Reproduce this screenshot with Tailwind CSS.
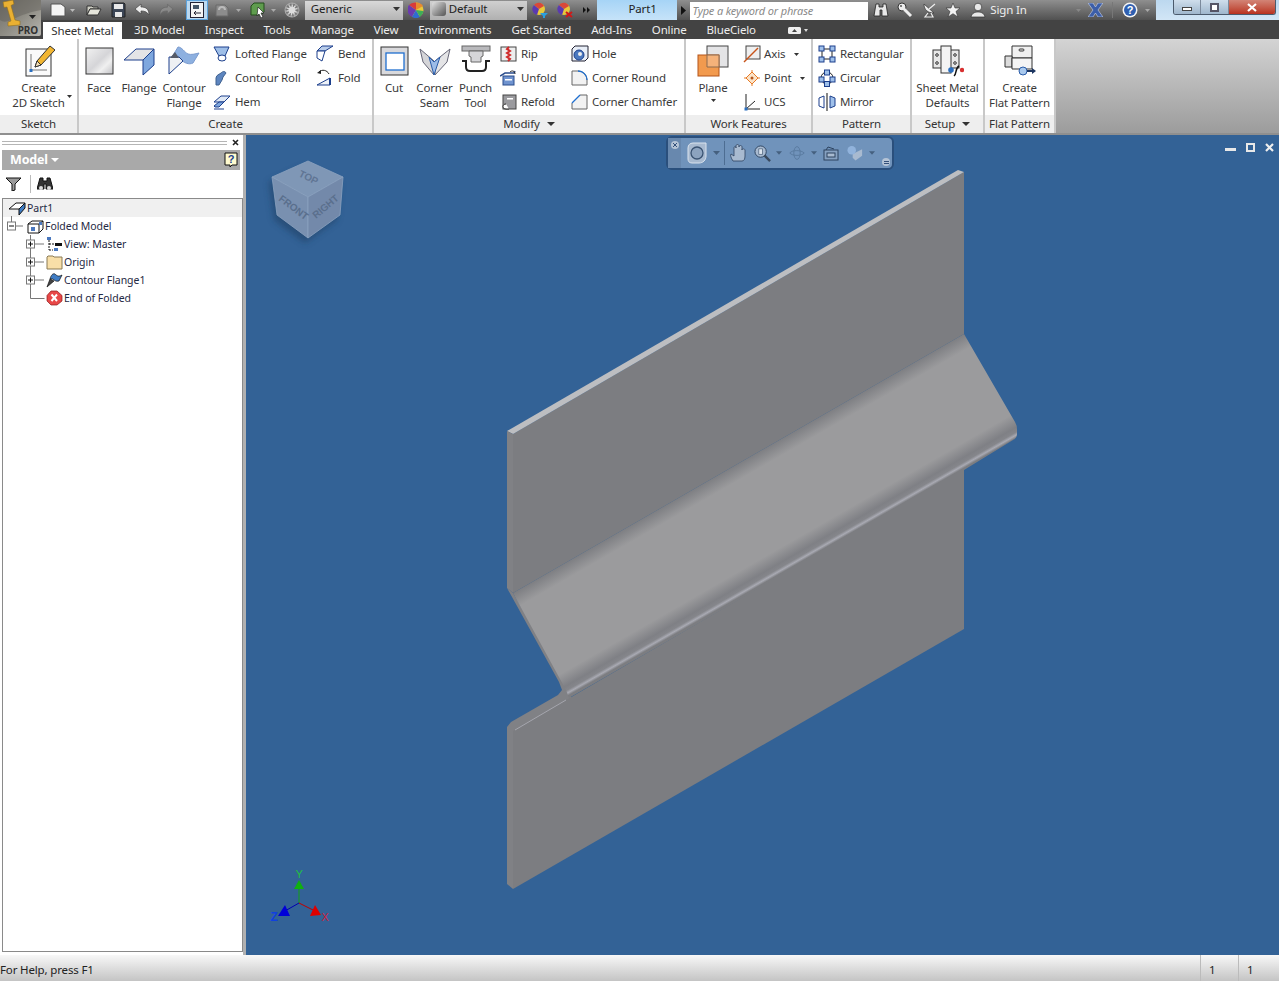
<!DOCTYPE html>
<html lang="en">
<head>
<meta charset="UTF-8">
<title>Autodesk Inventor - Part1</title>
<script src="https://cdn.jsdelivr.net/npm/@tailwindcss/browser@4"></script>
</head>
<body class="m-0 bg-white">
<div class="flex h-[981px] w-[1279px] flex-col overflow-hidden bg-white font-['Noto_Sans',sans-serif] text-[11.5px] tracking-[-0.15px] text-[#3a3a3a]">

  <!-- title bar + tabs -->
  <header class="flex h-[39px] shrink-0 bg-[#434343]">
    <div class="relative h-[36px] w-[41px] shrink-0 rounded-br-[2px] bg-gradient-to-br from-[#6f6d66] via-[#8e8c84] to-[#b8b6b0]">
      <svg class="absolute left-0 top-0" width="41" height="36" viewBox="0 0 41 36">
        <path d="M0 20C8 26 16 14 41 10V0H0Z" fill="#5f5e58" opacity=".45"/>
        <path d="M3 2L13 0L14 4L11 5.500L15 20L20 21L20 25L8 26L8 22L11 21L7 7L4 7.500Z" fill="#eab032" stroke="#94701c" stroke-width=".6"/>
        <path d="M29 15h7l-3.500 4z" fill="#222"/>
      </svg>
      <span class="absolute bottom-0 right-[3px] text-[10px] font-bold leading-[12px] text-[#333]">PRO</span>
    </div>
    <div class="flex min-w-0 flex-1 flex-col">
      <div class="flex h-[20px] items-center bg-gradient-to-b from-[#8f8f8f] to-[#515151]">
        <svg class="ml-[9px]" width="16" height="16" viewBox="0 0 16 16"><path d="M1 2h10l4 3v9H1z" fill="#f4f4f4" stroke="#555"/></svg>
        <svg class="ml-[4px]" width="5" height="3" viewBox="0 0 5 3"><path d="M0 0h5L2.500 3z" fill="#bbb"/></svg>
        <svg class="ml-[11px]" width="16" height="16" viewBox="0 0 16 16"><path d="M1 13V4h5l1 1h5v2H4z" fill="#cfcfc4" stroke="#333"/><path d="M1 13l3-6h11l-3 6z" fill="#e6e6dc" stroke="#333"/></svg>
        <svg class="ml-[9px]" width="15" height="16" viewBox="0 0 15 16"><path d="M1 1h12l1 1v13H1z" fill="#3c4656" stroke="#222"/><rect x="3" y="2" width="9" height="5" fill="#e8e8e8"/><rect x="4" y="10" width="7" height="5" fill="#e8e8e8"/></svg>
        <svg class="ml-[8px]" width="16" height="16" viewBox="0 0 16 16"><path d="M1 7l6-5v3c5 0 8 2 8 8-2-3-4-4-8-4v3z" fill="#eee" stroke="#444" stroke-width=".7"/></svg>
        <svg class="ml-[9px]" width="15" height="16" viewBox="0 0 16 16"><path d="M15 7L9 2v3C4 5 1 7 1 13c2-3 4-4 8-4v3z" fill="#8a8a8a" stroke="#666" stroke-width=".7"/></svg>
        <div class="ml-[12px] flex h-[20px] w-[22px] items-center justify-center border border-[#5ea3dc] bg-[#bcd9f0]">
          <svg width="14" height="16" viewBox="0 0 14 16"><rect x=".5" y=".5" width="13" height="15" fill="#f4f4f4" stroke="#223"/><rect x="3" y="3" width="6" height="4" fill="#456"/><path d="M4 11h7M4 11l2-2M4 11l2 2" stroke="#223" fill="none"/></svg>
        </div>
        <svg class="ml-[6px]" width="16" height="16" viewBox="0 0 16 16"><path d="M2 3h9l3 3v8H2z" fill="#8c8c8c" stroke="#6a6a6a"/><path d="M5 8a3 3 0 0 1 6 0" stroke="#bbb" fill="none" stroke-width="2"/></svg>
        <svg class="ml-[6px]" width="5" height="3" viewBox="0 0 5 3"><path d="M0 0h5L2.500 3z" fill="#aaa"/></svg>
        <svg class="ml-[9px]" width="16" height="16" viewBox="0 0 16 16"><path d="M1 4l3-3h10v9l-3 3H1z" fill="#5f9c4e" stroke="#234d1c"/><path d="M8 5l6 6-3 0 2 4-2 1-2-4-2 2z" fill="#fff" stroke="#222" stroke-width=".7"/></svg>
        <svg class="ml-[5px]" width="5" height="3" viewBox="0 0 5 3"><path d="M0 0h5L2.500 3z" fill="#aaa"/></svg>
        <svg class="ml-[8px]" width="16" height="16" viewBox="0 0 16 16"><circle cx="8" cy="8" r="7.500" fill="#aaa"/><circle cx="8" cy="8" r="5" fill="#ddd" stroke="#777" stroke-dasharray="1.500 1.500" stroke-width="3"/></svg>
        <div class="ml-[5px] flex h-[19px] w-[98px] items-center justify-between bg-gradient-to-b from-[#d9d9d9] to-[#b4b4b4] pb-[2px] pl-[6px] pr-[3px] text-[#222]"><span>Generic</span><svg width="7" height="4" viewBox="0 0 7 4"><path d="M0 0h7L3.500 4z" fill="#333"/></svg></div>
        <svg class="ml-[5px]" width="16" height="16" viewBox="0 0 16 16"><circle cx="8" cy="8" r="7.500" fill="#e8c93a"/><path d="M8 8L1 3A8 8 0 0 1 8 .5z" fill="#d93a3a"/><path d="M8 8V.5A8 8 0 0 1 15 4z" fill="#e88a2e"/><path d="M8 8L1 3A8 8 0 0 0 4 15z" fill="#6b3ab0"/><path d="M8 8L4 15A8 8 0 0 0 12 15z" fill="#2f6bd0"/><path d="M8 8L12 15A8 8 0 0 0 15.500 9z" fill="#3fae58"/></svg>
        <div class="ml-[6px] flex h-[19px] w-[97px] items-center justify-between bg-gradient-to-b from-[#d0d0d0] to-[#b0b0b0] pb-[2px] pl-[2px] pr-[3px] text-[#222]"><span class="flex items-center gap-[3px]"><span class="h-[14px] w-[14px] rounded-[3px] bg-gradient-to-br from-[#e4e4e4] to-[#555]"></span>Default</span><svg width="7" height="4" viewBox="0 0 7 4"><path d="M0 0h7L3.500 4z" fill="#333"/></svg></div>
        <svg class="ml-[5px]" width="16" height="16" viewBox="0 0 16 16"><circle cx="7" cy="7" r="6" fill="#e8c93a"/><path d="M7 7L2 3A6 6 0 0 1 12 4z" fill="#d9483a"/><path d="M7 7L2 3A6 6 0 0 0 5 13z" fill="#5a3ab0"/><path d="M8 11h8l-3 3v2h-2v-2z" fill="#2aa0e0"/></svg>
        <svg class="ml-[9px]" width="16" height="16" viewBox="0 0 16 16"><circle cx="7" cy="7" r="6" fill="#e8c93a"/><path d="M7 7L2 3A6 6 0 0 1 12 4z" fill="#d9483a"/><path d="M7 7L2 3A6 6 0 0 0 5 13z" fill="#5a3ab0"/><path d="M9 10l6 5M15 10l-6 5" stroke="#d01818" stroke-width="2"/></svg>
        <svg class="ml-[10px]" width="8" height="6" viewBox="0 0 8 6"><path d="M0 0l3 3-3 3zM4 0l3 3-3 3z" fill="#111"/></svg>
        <div class="ml-[6px] flex h-[20px] w-[80px] items-center justify-center bg-gradient-to-b from-[#a6d4f6] to-[#c6e3f9] pb-[3px] pl-[12px] text-[#222]">Part1</div>
        <svg class="ml-[4px]" width="5" height="9" viewBox="0 0 5 9"><path d="M0 0l5 4.500L0 9z" fill="#111"/></svg>
        <div class="ml-[4px] flex h-[18px] w-[179px] items-center self-end bg-white pl-[3px] text-[11px] italic text-[#8a8a8a]">Type a keyword or phrase</div>
        <svg class="ml-[5px]" width="16" height="16" viewBox="0 0 16 16"><path d="M3 2h3v3h4V2h3l2 12H9V8H7v6H1z" fill="#e8e8e8" stroke="#222" stroke-width=".8"/></svg>
        <svg class="ml-[8px]" width="16" height="16" viewBox="0 0 16 16"><circle cx="5" cy="5" r="4" fill="#eee" stroke="#333"/><path d="M7 7l7 7" stroke="#eee" stroke-width="3"/><circle cx="4" cy="4" r="1" fill="#555"/></svg>
        <svg class="ml-[9px]" width="16" height="16" viewBox="0 0 16 16"><path d="M2 2c0 6 4 9 10 9z" fill="#eee" stroke="#333" stroke-width=".7"/><path d="M7 7l6-5M6 11l-3 4h8l-2-4" stroke="#eee" fill="none" stroke-width="1.200"/></svg>
        <svg class="ml-[7px]" width="16" height="16" viewBox="0 0 16 16"><path d="M8 1l2 5h5l-4 3.500 2 5.500-5-3.300L3 15l2-5.500L1 6h5z" fill="#f2f2f2" stroke="#333" stroke-width=".6"/></svg>
        <svg class="ml-[9px]" width="16" height="16" viewBox="0 0 16 16"><circle cx="8" cy="5" r="3.800" fill="#e8e8e8" stroke="#333" stroke-width=".7"/><path d="M1 15c1-4 4-5 7-5s6 1 7 5z" fill="#e8e8e8" stroke="#333" stroke-width=".7"/></svg>
        <span class="ml-[4px] w-[36px] whitespace-nowrap text-[#eee]">Sign In</span>
        <svg class="ml-[50px]" width="5" height="3" viewBox="0 0 5 3"><path d="M0 0h5L2.500 3z" fill="#888"/></svg>
        <svg class="ml-[7px]" width="15" height="14" viewBox="0 0 15 14"><path d="M0 0h5l2.500 4L10 0h5l-5 7 5 7h-5l-2.500-4L5 14H0l5-7z" fill="#3c5ea8" stroke="#c9d4ee" stroke-width=".6"/></svg>
        <span class="ml-[9px] h-[16px] w-px bg-[#777]"></span>
        <svg class="ml-[9px]" width="16" height="16" viewBox="0 0 16 16"><circle cx="8" cy="8" r="7.500" fill="#f4f4f4"/><circle cx="8" cy="8" r="6" fill="#2f5fb0"/><text x="8" y="12" text-anchor="middle" font-size="11" font-weight="700" fill="#fff" font-family="Liberation Sans, sans-serif">?</text></svg>
        <svg class="ml-[7px]" width="5" height="3" viewBox="0 0 5 3"><path d="M0 0h5L2.500 3z" fill="#aaa"/></svg>
        <div class="ml-[6px] flex h-[20px] w-[123px] items-start justify-end bg-gradient-to-b from-[#bcd8ef] to-[#d2e6f6] pr-[3px]">
          <div class="flex h-[15px] w-[103px] overflow-hidden rounded-b-[3px] border border-t-0 border-[#4b5a6c]">
            <div class="flex w-[27px] items-center justify-center border-r border-[#7b8a9c] bg-gradient-to-b from-[#cfdeec] to-[#9fb7cd]"><span class="mt-[4px] h-[4px] w-[10px] border border-[#444] bg-white"></span></div>
            <div class="flex w-[28px] items-center justify-center border-r border-[#7b8a9c] bg-gradient-to-b from-[#cfdeec] to-[#9fb7cd]"><span class="h-[9px] w-[9px] border-2 border-[#556] bg-white"></span></div>
            <div class="flex flex-1 items-center justify-center bg-gradient-to-b from-[#d28476] to-[#b8301e]"><svg width="10" height="9" viewBox="0 0 10 9"><path d="M1 1l8 7M9 1L1 8" stroke="#fff" stroke-width="2.200"/></svg></div>
          </div>
        </div>
      </div>
      <nav class="flex h-[19px] items-end text-[#eee]">
        <div class="ml-[2px] flex h-[17px] w-[79px] items-center justify-center bg-white text-[#333]">Sheet Metal</div>
        <span class="ml-[12px] flex h-[18px] items-center">3D Model</span>
        <span class="ml-[20px] flex h-[18px] items-center">Inspect</span>
        <span class="ml-[20px] flex h-[18px] items-center">Tools</span>
        <span class="ml-[20px] flex h-[18px] items-center">Manage</span>
        <span class="ml-[20px] flex h-[18px] items-center">View</span>
        <span class="ml-[20px] flex h-[18px] items-center">Environments</span>
        <span class="ml-[20px] flex h-[18px] items-center">Get Started</span>
        <span class="ml-[20px] flex h-[18px] items-center">Add-Ins</span>
        <span class="ml-[20px] flex h-[18px] items-center">Online</span>
        <span class="ml-[20px] flex h-[18px] items-center">BlueCielo</span>
        <svg class="mb-[5px] ml-[32px]" width="20" height="7" viewBox="0 0 20 7"><rect width="13" height="7" rx="1.500" fill="#eee"/><path d="M4 5l2.500-3L9 5z" fill="#444"/><path d="M16 2h4l-2 3z" fill="#ddd"/></svg>
      </nav>
    </div>
  </header>

  <!-- ribbon -->
  <section class="flex h-[96px] shrink-0 gap-[2px] border-b-2 border-[#8f8f8f] bg-[#c8c8c8]">
    <div class="flex w-[77px] flex-col bg-white">
      <div class="flex h-[76px] justify-center">
        <div class="flex w-[77px] flex-col items-center pt-[6px] leading-[15px]">
          <svg width="32" height="32" viewBox="0 0 32 32"><rect x="3" y="4" width="25" height="27" fill="#fafafa" stroke="#333"/><path d="M8 9v16h16" stroke="#777" fill="none"/><rect x="6.500" y="24" width="3" height="3" fill="#2a6fc0"/><path d="M12 22l2-6L27 1l5 4-14 15z" fill="#f2b632" stroke="#333"/><path d="M12 22l2-6 4 4z" fill="#f5deb3" stroke="#333"/></svg>
          <span class="mt-[3px]">Create</span>
          <span>2D Sketch</span>
        </div>
      </div>
      <div class="relative flex h-[18px] items-center justify-center bg-[#eeeeee] text-[#333]">Sketch<svg class="absolute right-[5px] top-[-20px]" width="5" height="3" viewBox="0 0 5 3"><path d="M0 0h5L2.500 3z" fill="#333"/></svg></div>
    </div>

    <div class="flex w-[293px] flex-col bg-white">
      <div class="flex h-[76px]">
        <div class="flex w-[40px] flex-col items-center pt-[6px] leading-[15px]">
          <svg width="32" height="32" viewBox="0 0 32 32"><defs><linearGradient id="faceG" x1="0" y1="0" x2="1" y2="1"><stop offset="0" stop-color="#f2f2f2"/><stop offset=".5" stop-color="#d5d5d8"/><stop offset=".7" stop-color="#f0f0f0"/><stop offset="1" stop-color="#c0c0c4"/></linearGradient></defs><rect x="3" y="3" width="27" height="26" fill="url(#faceG)" stroke="#333"/></svg>
          <span class="mt-[3px]">Face</span>
        </div>
        <div class="flex w-[40px] flex-col items-center pt-[6px] leading-[15px]">
          <svg width="32" height="32" viewBox="0 0 32 32"><path d="M1 15L13 4h18L20 15z" fill="#e4e4e6" stroke="#1c3f8c"/><path d="M20 15L31 4v16L20 30z" fill="#7ea7de" stroke="#1c3f8c"/></svg>
          <span class="mt-[3px]">Flange</span>
        </div>
        <div class="flex w-[50px] flex-col items-center pt-[6px] leading-[15px]">
          <svg width="32" height="32" viewBox="0 0 32 32"><path d="M4 12L10 2c4 0 6 5 10 7 3 1 7 0 11-1l-6 10c-4 2-9 0-13-4l-3 0z" fill="#8db0e0" stroke="#7c9ccf"/><path d="M1 12h10l4 4L1 29z" fill="#eef0f3" stroke="#1c3f8c"/><path d="M2 13l5-6 4 6z" fill="#555a66"/></svg>
          <span class="mt-[3px]">Contour</span>
          <span>Flange</span>
        </div>
        <div class="ml-[4px] flex w-[103px] flex-col pt-[3px]">
          <div class="flex h-[24px] items-center gap-[4px] whitespace-nowrap"><svg width="18" height="18" viewBox="0 0 18 18"><path d="M1 2h15l-4 9H6z" fill="#9fbfe8" stroke="#1c3f8c"/><ellipse cx="9" cy="13" rx="4" ry="3" fill="#fff" stroke="#1c3f8c"/></svg>Lofted Flange</div>
          <div class="flex h-[24px] items-center gap-[4px] whitespace-nowrap"><svg width="18" height="18" viewBox="0 0 18 18"><path d="M3 16V9c0-3 4-4 5-5 2-2 4-2 5 0l-3 4-1 3-3 5z" fill="#5d85bf" stroke="#3e608f"/></svg>Contour Roll</div>
          <div class="flex h-[24px] items-center gap-[4px] whitespace-nowrap"><svg width="18" height="18" viewBox="0 0 18 18"><path d="M1 9L8 3h9l-6 6z" fill="#dfe8f5" stroke="#1c3f8c"/><path d="M1 13l5-4h5l-5 5H2z" fill="#7ea7de" stroke="#1c3f8c"/><path d="M1 16h10" stroke="#1c3f8c"/></svg>Hem</div>
        </div>
        <div class="flex flex-col pt-[3px]">
          <div class="flex h-[24px] items-center gap-[4px] whitespace-nowrap"><svg width="18" height="18" viewBox="0 0 18 18"><path d="M1 6l5-5h11l-8 5z" fill="#b9cdea" stroke="#1c3f8c"/><path d="M1 6h8l-3 10-5-3z" fill="#fff" stroke="#1c3f8c"/></svg>Bend</div>
          <div class="flex h-[24px] items-center gap-[4px] whitespace-nowrap"><svg width="18" height="18" viewBox="0 0 18 18"><path d="M1 16L14 9v7z" fill="#eef2f8" stroke="#1c3f8c"/><path d="M14 9v7" stroke="#1c3f8c" stroke-width="2"/><path d="M3 3c3-3 8-2 10 2" fill="none" stroke="#222"/><path d="M1 4l4-3v4z" fill="#222"/></svg>Fold</div>
        </div>
      </div>
      <div class="flex h-[18px] items-center justify-center bg-[#eeeeee] text-[#333]">Create</div>
    </div>

    <div class="flex w-[310px] flex-col bg-white">
      <div class="flex h-[76px]">
        <div class="flex w-[40px] flex-col items-center pt-[6px] leading-[15px]">
          <svg width="32" height="32" viewBox="0 0 32 32"><rect x="3" y="2" width="27" height="28" fill="#d9d9dc" stroke="#333"/><rect x="8" y="8" width="18" height="17" fill="#fff" stroke="#1f6fcf" stroke-width="1.300"/></svg>
          <span class="mt-[3px]">Cut</span>
        </div>
        <div class="flex w-[41px] flex-col items-center pt-[6px] leading-[15px]">
          <svg width="32" height="32" viewBox="0 0 32 32"><path d="M1 4l14 12v14L4 17z" fill="#d5d5d8" stroke="#667"/><path d="M31 4L16 16v14l12-13z" fill="#e4e4e6" stroke="#667"/><path d="M15 17l-5-5 5 18 6-18z" fill="#9cbce8" stroke="#2a5ca8"/></svg>
          <span class="mt-[3px]">Corner</span>
          <span>Seam</span>
        </div>
        <div class="flex w-[41px] flex-col items-center pt-[6px] leading-[15px]">
          <svg width="32" height="32" viewBox="0 0 32 32"><rect x="2" y="1" width="28" height="5" fill="#b9b9bc" stroke="#666"/><path d="M9 6h14v5l-2 1v5H11v-5l-2-1z" fill="#d5d5d8" stroke="#666"/><path d="M2 16h4v6c0 3 2 4 4 4h12c2 0 4-1 4-4v-6h4" fill="none" stroke="#222" stroke-width="2"/></svg>
          <span class="mt-[3px]">Punch</span>
          <span>Tool</span>
        </div>
        <div class="ml-[4px] flex w-[71px] flex-col pt-[3px]">
          <div class="flex h-[24px] items-center gap-[3px] whitespace-nowrap"><svg width="18" height="18" viewBox="0 0 18 18"><rect x="1" y="2" width="15" height="14" fill="#eee" stroke="#444"/><path d="M9 2l-2 2 3 2-3 2 3 2-3 2 3 2-2 2" fill="none" stroke="#d02a2a" stroke-width="2"/></svg>Rip</div>
          <div class="flex h-[24px] items-center gap-[3px] whitespace-nowrap"><svg width="18" height="18" viewBox="0 0 18 18"><rect x="3" y="7" width="11" height="9" fill="#6f93cf" stroke="#2a4c8c"/><rect x="5" y="10" width="7" height="1.500" fill="#fff"/><path d="M0 7l5-3h9l1-2" fill="none" stroke="#2a4c8c" stroke-width="1.500"/><path d="M10 3c2-2 5-1 5 2" fill="none" stroke="#222"/></svg>Unfold</div>
          <div class="flex h-[24px] items-center gap-[3px] whitespace-nowrap"><svg width="18" height="18" viewBox="0 0 18 18"><rect x="3" y="2" width="13" height="14" fill="#9a9a9e" stroke="#444"/><rect x="7" y="5" width="6" height="1.500" fill="#fff"/><path d="M6 11c-4 0-4 5 0 5h3" fill="#fff" stroke="#222"/></svg>Refold</div>
        </div>
        <div class="flex flex-col pt-[3px]">
          <div class="flex h-[24px] items-center gap-[3px] whitespace-nowrap"><svg width="18" height="18" viewBox="0 0 18 18"><path d="M1 4l3-3h13v12l-3 3H1z" fill="#e8eef7" stroke="#223"/><circle cx="8" cy="10" r="5" fill="#4a78bf" stroke="#1c3f8c"/><circle cx="9" cy="9" r="2" fill="#eee"/></svg>Hole</div>
          <div class="flex h-[24px] items-center gap-[3px] whitespace-nowrap"><svg width="18" height="18" viewBox="0 0 18 18"><path d="M1 16V2h6c5 0 9 4 9 9v5z" fill="#f2f2f2" stroke="#666"/><path d="M7 2c5 0 9 4 9 9" fill="none" stroke="#1f6fcf" stroke-width="1.300"/></svg>Corner Round</div>
          <div class="flex h-[24px] items-center gap-[3px] whitespace-nowrap"><svg width="18" height="18" viewBox="0 0 18 18"><path d="M1 16V10L9 2h7v14z" fill="#f2f2f2" stroke="#666"/><path d="M1 10L9 2" fill="none" stroke="#1f6fcf" stroke-width="1.300"/></svg>Corner Chamfer</div>
        </div>
      </div>
      <div class="flex h-[18px] items-center justify-center gap-[7px] bg-[#eeeeee] text-[#333]">Modify<svg width="8" height="4" viewBox="0 0 8 4"><path d="M0 0h8L4 4z" fill="#333"/></svg></div>
    </div>

    <div class="flex w-[125px] flex-col bg-white">
      <div class="flex h-[76px]">
        <div class="flex w-[54px] flex-col items-center pt-[6px] leading-[15px]">
          <svg width="32" height="32" viewBox="0 0 32 32"><rect x="10" y="1" width="21" height="21" fill="#e4e4e6" stroke="#444"/><rect x="1" y="10" width="21" height="21" fill="#f29a4e" stroke="#b3541a"/><path d="M10 10h12v12H10z" fill="#f5b27a" stroke="#8c6a4e"/></svg>
          <span class="mt-[3px]">Plane</span>
          <svg class="mt-[4px]" width="5" height="3" viewBox="0 0 5 3"><path d="M0 0h5L2.500 3z" fill="#333"/></svg>
        </div>
        <div class="ml-[3px] flex flex-col pt-[3px]">
          <div class="flex h-[24px] items-center gap-[3px] whitespace-nowrap"><svg width="18" height="18" viewBox="0 0 18 18"><rect x="3" y="1" width="14" height="13" fill="#efefef" stroke="#444"/><path d="M1 17L15 3" stroke="#c8541a" stroke-width="1.500"/></svg>Axis<svg class="ml-[6px]" width="5" height="3" viewBox="0 0 5 3"><path d="M0 0h5L2.500 3z" fill="#333"/></svg></div>
          <div class="flex h-[24px] items-center gap-[3px] whitespace-nowrap"><svg width="18" height="18" viewBox="0 0 18 18"><path d="M9 1v16M1 9h16" stroke="#e87a24"/><path d="M9 3l6 6-6 6-6-6z" fill="#fbe3c8" stroke="#e87a24"/><circle cx="9" cy="9" r="1.500" fill="#b3541a"/></svg>Point<svg class="ml-[6px]" width="5" height="3" viewBox="0 0 5 3"><path d="M0 0h5L2.500 3z" fill="#333"/></svg></div>
          <div class="flex h-[24px] items-center gap-[3px] whitespace-nowrap"><svg width="18" height="18" viewBox="0 0 18 18"><path d="M3 1v15h14M3 16L12 8" fill="none" stroke="#222"/><rect x="1.500" y="14.500" width="3" height="3" fill="#2a6fc0"/></svg>UCS</div>
        </div>
      </div>
      <div class="flex h-[18px] items-center justify-center bg-[#eeeeee] text-[#333]">Work Features</div>
    </div>

    <div class="flex w-[97px] flex-col bg-white">
      <div class="flex h-[76px] flex-col pl-[5px] pt-[3px]">
        <div class="flex h-[24px] items-center gap-[4px] whitespace-nowrap"><svg width="18" height="18" viewBox="0 0 18 18"><path d="M4 4h10M4 14h10M4 4v10M14 4v10" stroke="#222"/><rect x="1" y="1" width="5" height="5" fill="#9fc0ea" stroke="#1c3f8c"/><rect x="12" y="1" width="5" height="5" fill="#9fc0ea" stroke="#1c3f8c"/><rect x="1" y="12" width="5" height="5" fill="#9fc0ea" stroke="#1c3f8c"/><rect x="12" y="12" width="5" height="5" fill="#9fc0ea" stroke="#1c3f8c"/></svg>Rectangular</div>
        <div class="flex h-[24px] items-center gap-[4px] whitespace-nowrap"><svg width="18" height="18" viewBox="0 0 18 18"><circle cx="9" cy="9" r="6" fill="none" stroke="#222"/><rect x="6.500" y="1" width="5" height="5" fill="#9fc0ea" stroke="#1c3f8c"/><rect x="1" y="8" width="5" height="5" fill="#9fc0ea" stroke="#1c3f8c"/><rect x="12" y="8" width="5" height="5" fill="#9fc0ea" stroke="#1c3f8c"/><rect x="6.500" y="12.500" width="5" height="5" fill="#9fc0ea" stroke="#1c3f8c"/></svg>Circular</div>
        <div class="flex h-[24px] items-center gap-[4px] whitespace-nowrap"><svg width="18" height="18" viewBox="0 0 18 18"><path d="M9 0v18" stroke="#111"/><path d="M6 3L1 5v8l5 2z" fill="#fff" stroke="#1c3f8c"/><path d="M12 3l5 2v8l-5 2z" fill="#9fc0ea" stroke="#1c3f8c"/></svg>Mirror</div>
      </div>
      <div class="flex h-[18px] items-center justify-center bg-[#eeeeee] text-[#333]">Pattern</div>
    </div>

    <div class="flex w-[71px] flex-col bg-white">
      <div class="flex h-[76px] flex-col items-center pt-[6px] leading-[15px]">
        <svg width="32" height="32" viewBox="0 0 32 32"><rect x="1" y="5" width="26" height="18" fill="#e8e8e8" stroke="#333"/><rect x="9" y="1" width="10" height="27" fill="#f4f4f4" stroke="#333"/><circle cx="5" cy="10" r="1.300" fill="none" stroke="#333"/><circle cx="5" cy="18" r="1.300" fill="none" stroke="#333"/><circle cx="23" cy="10" r="1.300" fill="none" stroke="#333"/><circle cx="23" cy="18" r="1.300" fill="none" stroke="#333"/><circle cx="19" cy="25" r="2.800" fill="#2a6fc0"/><circle cx="30" cy="25" r="2.200" fill="#d83030"/><path d="M22 31c3-2 1-8 5-10" fill="none" stroke="#111" stroke-width="1.500"/></svg>
        <span class="mt-[3px] whitespace-nowrap">Sheet Metal</span>
        <span>Defaults</span>
      </div>
      <div class="flex h-[18px] items-center justify-center gap-[7px] bg-[#eeeeee] text-[#333]">Setup<svg width="8" height="4" viewBox="0 0 8 4"><path d="M0 0h8L4 4z" fill="#333"/></svg></div>
    </div>

    <div class="flex w-[69px] flex-col bg-white">
      <div class="flex h-[76px] flex-col items-center pt-[6px] leading-[15px]">
        <svg width="32" height="32" viewBox="0 0 32 32"><path d="M8 1h20v12H8z" fill="#f0f0f0" stroke="#333"/><path d="M1 11h7v11H1z" fill="#dcdcdc" stroke="#333"/><path d="M8 13h20v11H8z" fill="#f4f4f4" stroke="#333"/><rect x="15" y="4" width="5" height="2" rx="1" fill="none" stroke="#333"/><circle cx="19" cy="26" r="4" fill="#a9c9ee" stroke="#2a5ca8"/><path d="M23 26h6" stroke="#1c3560" stroke-width="2"/><path d="M28 23l4 3-4 3z" fill="#1c3560"/></svg>
        <span class="mt-[3px]">Create</span>
        <span class="whitespace-nowrap">Flat Pattern</span>
      </div>
      <div class="flex h-[18px] items-center justify-center whitespace-nowrap bg-[#eeeeee] text-[#333]">Flat Pattern</div>
    </div>

    <div class="flex-1 bg-gradient-to-b from-[#d4d4d4] to-[#9c9c9c]"></div>
  </section>

  <!-- main area -->
  <main class="flex min-h-0 flex-1">
    <aside class="flex w-[243px] shrink-0 flex-col bg-white text-[#1f2a44]">
      <div class="flex h-[15px] items-center pl-[2px] pr-[4px]">
        <div class="h-[4px] flex-1 border-y border-[#b5b5b5]"></div>
        <svg class="ml-[5px]" width="7" height="7" viewBox="0 0 7 7"><path d="M1 1l5 5M6 1L1 6" stroke="#222" stroke-width="1.600"/></svg>
      </div>
      <div class="mx-[2px] flex h-[20px] w-[238px] items-center justify-between bg-[#a9a9a9] pl-[8px] pr-[2px] text-[12.5px] font-bold text-white">
        <span class="flex items-center gap-[3px]">Model<svg width="8" height="4" viewBox="0 0 8 4"><path d="M0 0h8L4 4z" fill="#fff"/></svg></span>
        <svg width="14" height="16" viewBox="0 0 14 16"><path d="M1 1h12v12H8l-2 2v-2H1z" fill="#fffbd0" stroke="#111"/><text x="7" y="11" text-anchor="middle" font-size="11" font-weight="700" fill="#1c3f8c" font-family="Liberation Sans, sans-serif">?</text></svg>
      </div>
      <div class="flex h-[28px] items-center pl-[6px]">
        <svg width="15" height="14" viewBox="0 0 15 14"><path d="M0 1h15L9 7v6l-3 1V7z" fill="#9a9a9a" stroke="#111"/></svg>
        <span class="ml-[9px] h-[18px] w-px bg-[#bbb]"></span>
        <svg class="ml-[6px]" width="16" height="14" viewBox="0 0 16 14"><path d="M3 1h3v3h4V1h3l3 11H9V7H7v5H0z" fill="#333" stroke="#111"/><circle cx="4" cy="11" r="2" fill="#ddd"/><circle cx="12" cy="11" r="2" fill="#ddd"/></svg>
      </div>
      <div class="relative mb-[3px] ml-[2px] flex-1 border border-[#8a8a8a] bg-white text-[10.5px] tracking-[-0.05px]">
        <div class="flex h-[18px] items-center bg-[#f0f0f0] pl-[5px]"><svg width="18" height="16" viewBox="0 0 18 16"><path d="M1 9L8 3h9l-6 6z" fill="#fff" stroke="#111"/><path d="M11 9l6-6v5l-6 7z" fill="#3f7cc4" stroke="#111"/></svg><span class="ml-[1px] mt-[1px]">Part1</span></div>
        <div class="flex h-[18px] items-center pl-[24px]"><svg width="17" height="16" viewBox="0 0 17 16"><path d="M1 6l4-3h11v8l-4 4H1z" fill="#fff" stroke="#111"/><path d="M1 6h11v9M12 6l4-3" fill="none" stroke="#111"/><rect x="4" y="9" width="4" height="4" fill="#4a78bf"/><rect x="12" y="4" width="3" height="3" fill="#4a78bf"/></svg><span class="ml-[1px] mt-[1px]">Folded Model</span></div>
        <div class="flex h-[18px] items-center pl-[43px]"><svg width="17" height="16" viewBox="0 0 17 16"><rect x="1" y="1" width="4" height="3" fill="#4a78bf"/><path d="M3 4v10M3 8h5M3 14h4" stroke="#111" fill="none" stroke-dasharray="2 1"/><rect x="9" y="7" width="7" height="3" fill="#111"/><rect x="8" y="12" width="4" height="3" fill="#4a78bf"/></svg><span class="ml-[1px] mt-[1px]">View: Master</span></div>
        <div class="flex h-[18px] items-center pl-[43px]"><svg width="17" height="16" viewBox="0 0 17 16"><path d="M1 3l1-1h5l1 1h8v12H1z" fill="#f8dfa8" stroke="#8a7a55"/></svg><span class="ml-[1px] mt-[1px]">Origin</span></div>
        <div class="flex h-[18px] items-center pl-[43px]"><svg width="17" height="16" viewBox="0 0 17 16"><path d="M4 7c1-4 3-6 5-5 2 2 4 3 7 1l-3 6c-3 1-5-1-6-2z" fill="#3f7cc4" stroke="#111" stroke-width=".7"/><path d="M1 15l3-8 4 2z" fill="#444" stroke="#111" stroke-width=".7"/></svg><span class="ml-[1px] mt-[1px]">Contour Flange1</span></div>
        <div class="flex h-[18px] items-center pl-[43px]"><svg width="17" height="16" viewBox="0 0 17 16"><path d="M5 1h6l5 4.500v5.500L11 15H5l-4-4V5.500z" fill="#e84848" stroke="#8c1a1a" stroke-width=".7"/><path d="M5.500 4.500l5.500 6.500M11 4.500l-5.500 6.500" stroke="#fff" stroke-width="2"/></svg><span class="ml-[1px] mt-[1px]">End of Folded</span></div>
        <svg class="absolute left-0 top-0" width="50" height="110" viewBox="0 0 50 110" fill="none">
          <path d="M8.500 17v6M12 27h8M27.500 36v63.500M32 45h9M32 63h9M32 81h9M27.500 99.500h14" stroke="#777"/>
          <rect x="4.500" y="23" width="8" height="8" fill="#fff" stroke="#777"/><path d="M6 27h5" stroke="#111"/>
          <rect x="23.500" y="41" width="8" height="8" fill="#fff" stroke="#777"/><path d="M25 45h5M27.500 42.500v5" stroke="#111"/>
          <rect x="23.500" y="59" width="8" height="8" fill="#fff" stroke="#777"/><path d="M25 63h5M27.500 60.500v5" stroke="#111"/>
          <rect x="23.500" y="77" width="8" height="8" fill="#fff" stroke="#777"/><path d="M25 81h5M27.500 78.500v5" stroke="#111"/>
        </svg>
      </div>
    </aside>

    <div class="w-[3px] shrink-0 bg-[#b0b0b0]"></div>

    <div class="relative flex-1 bg-[#336296]">
      <svg class="absolute left-0 top-0" width="1033" height="820" viewBox="246 135 1033 820">
        <defs>
          <linearGradient id="band" gradientUnits="userSpaceOnUse" x1="964" y1="334" x2="1023.800" y2="438">
            <stop offset="0" stop-color="#7e7f83"/>
            <stop offset=".12" stop-color="#9b9b9d"/>
            <stop offset=".78" stop-color="#9b9b9d"/>
            <stop offset=".89" stop-color="#7f8085"/>
            <stop offset=".925" stop-color="#85868b"/>
            <stop offset=".947" stop-color="#a9aab3"/>
            <stop offset=".968" stop-color="#7c7d81"/>
          </linearGradient>
          <filter id="cubeShadow" x="-30%" y="-30%" width="160%" height="160%"><feGaussianBlur stdDeviation="3"/></filter>
        </defs>
        <!-- upper plate -->
        <path d="M513 434L964 172V334L513 593Z" fill="#7c7d81"/>
        <path d="M507 431L958 170L964 172L513 434Z" fill="#bdbec1"/>
        <path d="M507 431L513 434V593L507 588Z" fill="#808185"/>
        <!-- side strip of the profile -->
        <path d="M507 588L513 593L568 688L572 700L513 736L507 731V727L511 722L558 695L562 690L559 682Z" fill="#808185"/>
        <!-- lower plate -->
        <path d="M513 731L964 468V629L513 889Z" fill="#7c7d81"/>
        <path d="M507 727L513 731V889L507 884Z" fill="#808185"/>
        <!-- middle band, its lower bend runs out into the lower plate -->
        <path d="M513 593L964 334L1015 422Q1017 425 1017 430V434Q1017 438 1013 440L964 470L569 698L566 690Z" fill="url(#band)"/>
        <path d="M515 730L566 700" stroke="#a5a6ae" fill="none"/>

        <!-- view cube -->
        <path d="M277 215L308 238L340 215L343 177L308 161L272 177Z" fill="#1d3a5c" opacity=".5" filter="url(#cubeShadow)" transform="translate(-3 5)"/>
        <path d="M308 161L343 177L308 197L272 177Z" fill="#7f97b6" stroke="#8ba2bf" stroke-width=".8"/>
        <path d="M272 177L308 197V238L277 215Z" fill="#7990b0" stroke="#8ba2bf" stroke-width=".8"/>
        <path d="M343 177L308 197V238L340 215Z" fill="#7389aa" stroke="#8ba2bf" stroke-width=".8"/>
        <text transform="translate(298 176) rotate(27)" font-size="10" font-weight="700" fill="#5f7594" font-family="Liberation Sans, sans-serif">TOP</text>
        <text transform="translate(278 200) rotate(37)" font-size="10" font-weight="700" fill="#5a6f8d" font-family="Liberation Sans, sans-serif">FRONT</text>
        <text transform="translate(316 219) rotate(-40)" font-size="10" font-weight="700" fill="#5a6f8d" font-family="Liberation Sans, sans-serif">RIGHT</text>

        <!-- triad -->
        <path d="M299 888V903" stroke="#12a012"/>
        <path d="M299 903L285 911" stroke="#0000b0"/>
        <path d="M299 903L313 910" stroke="#c00000"/>
        <path d="M299 880L304 889H294Z" fill="#10b010"/>
        <path d="M285 905L290 916H278Z" fill="#0000d8"/>
        <path d="M315 905L321 915L310 916Z" fill="#e00000"/>
        <text x="299" y="878" text-anchor="middle" font-size="11" fill="#20c040" font-family="Liberation Sans, sans-serif">Y</text>
        <text x="274" y="921" text-anchor="middle" font-size="12" font-weight="700" fill="#1040e0" font-family="Liberation Sans, sans-serif">Z</text>
        <text x="325" y="921" text-anchor="middle" font-size="11" fill="#d02040" font-family="Liberation Sans, sans-serif">X</text>
      </svg>

      <!-- navigation bar -->
      <div class="absolute left-[420px] top-[1px] flex h-[34px] w-[228px] items-center rounded-[6px] border-2 border-[#2a4f7c] bg-[#7093bb]">
        <div class="flex h-full w-[13px] justify-center bg-[#6888ae] pt-[3px]"><span class="flex h-[8px] w-[8px] items-center justify-center rounded-full bg-[#b5c4d6]"><svg width="4" height="4" viewBox="0 0 4 4"><path d="M0 0l4 4M4 0L0 4" stroke="#33507a"/></svg></span></div>
        <svg class="ml-[5px]" width="22" height="22" viewBox="0 0 22 22"><path d="M2 6c0-3 2-5 5-5h13v13c0 4-3 7-7 7H6c-3 0-4-2-4-4z" fill="#a8bad0" stroke="#dae3ee"/><circle cx="11" cy="11" r="6" fill="#8ca3bf" stroke="#3a5372" stroke-width="1.300"/></svg>
        <svg class="ml-[5px]" width="7" height="4" viewBox="0 0 7 4"><path d="M0 0h7L3.500 4z" fill="#45607f"/></svg>
        <span class="ml-[4px] h-[24px] w-px bg-[#4d6d92]"></span>
        <svg class="ml-[5px]" width="16" height="18" viewBox="0 0 16 18"><path d="M3 17c-2-3-3-6-2-7l3 2V4c0-2 2-2 2 0V2c0-2 3-2 3 0v1c0-2 3-2 3 0v3c0-2 3-1 3 0v6c0 3-1 5-3 5z" fill="#a8bad0" stroke="#2d435f" stroke-width=".8"/></svg>
        <svg class="ml-[8px]" width="17" height="17" viewBox="0 0 18 18"><circle cx="7" cy="7" r="6" fill="#a8bad0" stroke="#2d435f"/><path d="M5 4h4v6H5z" fill="#dbe4ee" stroke="#2d435f" stroke-width=".6"/><path d="M11 11l6 6" stroke="#3a4a5e" stroke-width="2.500"/></svg>
        <svg class="ml-[5px]" width="6" height="4" viewBox="0 0 7 4"><path d="M0 0h7L3.500 4z" fill="#45607f"/></svg>
        <svg class="ml-[7px]" width="16" height="18" viewBox="0 0 20 18" fill="none" stroke="#56769b"><ellipse cx="10" cy="9" rx="4" ry="8"/><path d="M1 9c3-4 14-4 18 0-3 4-15 4-18 0z"/></svg>
        <svg class="ml-[6px]" width="6" height="4" viewBox="0 0 7 4"><path d="M0 0h7L3.500 4z" fill="#45607f"/></svg>
        <svg class="ml-[6px]" width="16" height="15" viewBox="0 0 16 15"><rect x="1" y="4" width="14" height="10" fill="#86a1c1" stroke="#2d435f"/><rect x="4" y="7" width="8" height="4" fill="#a8bad0" stroke="#2d435f"/><path d="M3 4l2-3 6 2" fill="none" stroke="#2d435f"/></svg>
        <svg class="ml-[8px]" width="17" height="16" viewBox="0 0 18 16"><path d="M6 9l10-5v7l-7 5-3-3z" fill="#a8bad0"/><circle cx="5" cy="5" r="4.500" fill="#91b3dc"/></svg>
        <svg class="ml-[5px]" width="6" height="4" viewBox="0 0 7 4"><path d="M0 0h7L3.500 4z" fill="#45607f"/></svg>
        <span class="absolute bottom-[2px] right-[2px] flex h-[8px] w-[8px] items-center justify-center rounded-full bg-[#b5c4d6]"><span class="h-[3px] w-[5px] border-y border-[#33507a]"></span></span>
      </div>

      <!-- view window controls -->
      <div class="absolute right-[5px] top-[8px] flex items-center gap-[10px]">
        <span class="mt-[3px] h-[3px] w-[11px] bg-[#e8e8e8]"></span>
        <span class="h-[9px] w-[9px] border-2 border-[#e8e8e8]"></span>
        <svg width="9" height="9" viewBox="0 0 9 9"><path d="M1 1l7 7M8 1L1 8" stroke="#eee" stroke-width="2.200"/></svg>
      </div>
    </div>
  </main>

  <!-- status bar -->
  <footer class="flex h-[26px] shrink-0 items-center bg-gradient-to-b from-[#f8f8f8] to-[#c4c4c4] text-[#222]">
    <span class="flex-1 pt-[3px]">For Help, press F1</span>
    <span class="flex h-full w-[38px] items-center border-l border-[#bbb] pl-[8px] pt-[3px]">1</span>
    <span class="flex h-full w-[41px] items-center border-l border-[#bbb] pl-[8px] pt-[3px]">1</span>
  </footer>
</div>
</body>
</html>
